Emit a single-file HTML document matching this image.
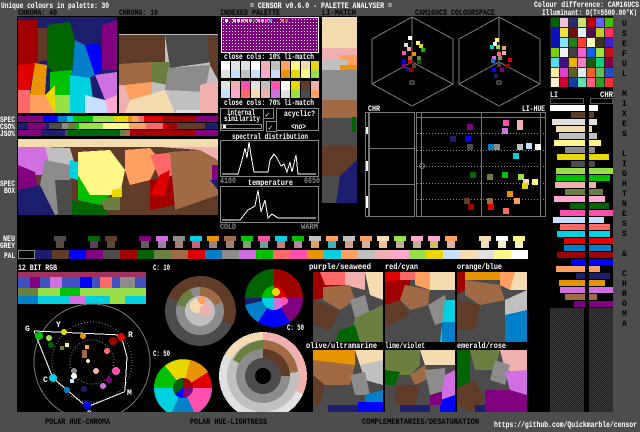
<!DOCTYPE html>
<html><head><meta charset="utf-8"><style>
html,body{margin:0;padding:0;background:#4d4d4d;}
svg{display:block}
text{font-family:"Liberation Mono",monospace;font-weight:bold;fill:#fff;font-size:8px}
</style></head><body>
<svg width="640" height="432" viewBox="0 0 640 432" xmlns="http://www.w3.org/2000/svg" shape-rendering="crispEdges">
<defs>
<pattern id="ck" width="2" height="2" patternUnits="userSpaceOnUse"><rect width="2" height="2" fill="#1e1e1e"/><rect width="1" height="1" fill="#3c3c3c"/><rect x="1" y="1" width="1" height="1" fill="#3c3c3c"/></pattern>
<pattern id="dots" width="3" height="3" patternUnits="userSpaceOnUse"><rect width="3" height="3" fill="#800080"/><rect x="1" y="1" width="1" height="1" fill="#fff"/></pattern>
</defs>
<rect width="640" height="432" fill="#4d4d4d"/>
<rect x="17" y="16" width="597" height="396" fill="#000"/>
<g lengthAdjust="spacingAndGlyphs">
<text x="1" y="8" textLength="108" lengthAdjust="spacingAndGlyphs">Unique colours in palette: 30</text>
<text x="250" y="8" textLength="142" lengthAdjust="spacingAndGlyphs">= CENSOR v0.6.0 - PALETTE ANALYSER =</text>
<text x="534" y="7" textLength="105" lengthAdjust="spacingAndGlyphs">Colour difference: CAM16UCS</text>
<text x="542" y="15" textLength="95" lengthAdjust="spacingAndGlyphs">Illuminant: D(T=5500.00°K)</text>
<text x="18" y="15" textLength="39" lengthAdjust="spacingAndGlyphs" style="fill:#000">CHROMA: 40</text>
<text x="119" y="15" textLength="39" lengthAdjust="spacingAndGlyphs" style="fill:#000">CHROMA: 10</text>
<text x="220" y="15" textLength="60" lengthAdjust="spacingAndGlyphs" style="fill:#000">INDEXED PALETTE</text>
<text x="322" y="15" textLength="34" lengthAdjust="spacingAndGlyphs" style="fill:#000">LI-MATCH</text>
<text x="415" y="15" textLength="80" lengthAdjust="spacingAndGlyphs" style="fill:#000">CAM16UCS COLOURSPACE</text>
</g>
<!-- chroma 40 -->
<g>
<rect x="18" y="17" width="99" height="96" fill="#1d1d6d"/>
<polygon points="18,20 38,20 38,65 18,65" fill="#a00000"/>
<polygon points="38,28 47,28 47,60 38,62" fill="#603c28"/>
<polygon points="47,25 70,22 75,40 72,70 55,75 47,65" fill="#006400"/>
<polygon points="75,40 85,45 95,75 85,80 72,75" fill="#0080c8"/>
<polygon points="85,45 100,43 102,70 95,75" fill="#0000ff"/>
<polygon points="102,25 117,20 117,70 102,70" fill="#800080"/>
<polygon points="18,65 35,63 30,90 18,90" fill="#e00000"/>
<polygon points="35,63 47,65 45,95 30,95" fill="#e89400"/>
<polygon points="50,72 72,70 70,95 50,95" fill="#00c000"/>
<polygon points="70,75 90,78 95,113 70,113" fill="#00d0e0"/>
<polygon points="95,75 117,72 117,95 105,100" fill="#d070e0"/>
<polygon points="18,90 30,90 30,113 18,113" fill="#ff6868"/>
<polygon points="30,95 45,95 55,113 30,113" fill="#ffa060"/>
<polygon points="45,95 55,85 55,113" fill="#e8d800"/>
<polygon points="55,95 70,95 70,113 55,113" fill="#98e048"/>
<polygon points="85,95 105,100 108,113 85,113" fill="#c8e0ff"/>
<polygon points="105,100 117,95 117,113 108,113" fill="#ffa8d0"/>
</g>
<!-- chroma 10 -->
<g>
<rect x="119" y="34" width="99" height="79" fill="#c0c0c0"/>
<polygon points="119,35 165,35 165,62 119,64" fill="#603c28"/>
<polygon points="165,35 207,35 213,62 170,68" fill="#4b4b4b"/>
<polygon points="119,64 152,62 152,85 119,85" fill="#a06a45"/>
<polygon points="152,62 170,62 168,85 152,82" fill="#6b8040"/>
<polygon points="168,68 210,65 205,92 165,90" fill="#8c8c8c"/>
<polygon points="207,35 218,35 218,80 210,65" fill="#603c28"/>
<polygon points="119,85 140,85 135,113 119,113" fill="#f0b0b0"/>
<polygon points="125,85 152,82 152,98 130,102" fill="#ffa060"/>
<polygon points="130,100 165,90 175,113 125,113" fill="#f5dcb0"/>
<polygon points="200,85 218,80 218,113 200,113" fill="#f0b0b0"/>
<rect x="176" y="110" width="24" height="3" fill="#e0e0e0"/>
</g>
<!-- indexed palette -->
<rect x="221" y="17" width="98" height="36" fill="#fff"/>
<rect x="222" y="18" width="96" height="34" fill="url(#dots)"/>
<g>
<rect x="225" y="19" width="3" height="3" fill="#fff"/><rect x="229" y="19" width="3" height="3" fill="#603c28"/><rect x="233" y="19" width="3" height="3" fill="#f5dcb0"/><rect x="237" y="19" width="3" height="3" fill="#e0e0e0"/><rect x="241" y="19" width="3" height="3" fill="#c0c0c0"/><rect x="245" y="19" width="3" height="3" fill="#e8d800"/><rect x="249" y="19" width="3" height="3" fill="#98e048"/><rect x="253" y="19" width="3" height="3" fill="#00c000"/><rect x="257" y="19" width="3" height="3" fill="#f0b0b0"/><rect x="261" y="19" width="3" height="3" fill="#ffa8d0"/><rect x="265" y="19" width="3" height="3" fill="#ff50b0"/><rect x="269" y="19" width="3" height="3" fill="#00d0e0"/><rect x="273" y="19" width="3" height="3" fill="#0000ff"/><rect x="277" y="19" width="3" height="3" fill="#a00000"/><rect x="281" y="19" width="3" height="3" fill="#e89400"/><rect x="285" y="19" width="3" height="3" fill="#a06a45"/><rect x="289" y="19" width="3" height="3" fill="#800080"/>
</g>
<text x="224" y="59" textLength="90" lengthAdjust="spacingAndGlyphs">close cols: 10% li-match</text>
<g>
<rect x="221" y="61" width="9" height="9" fill="#fff"/><rect x="221" y="70" width="9" height="8" fill="#e0e0e0"/>
<rect x="231" y="61" width="9" height="9" fill="#e0e0e0"/><rect x="231" y="70" width="9" height="8" fill="#c8e0ff"/>
<rect x="241" y="61" width="9" height="9" fill="#e0e0e0"/><rect x="241" y="70" width="9" height="8" fill="#c0c0c0"/>
<rect x="251" y="61" width="9" height="9" fill="#fff"/><rect x="251" y="70" width="9" height="8" fill="#c8e0ff"/>
<rect x="261" y="61" width="9" height="9" fill="#f0b0b0"/><rect x="261" y="70" width="9" height="8" fill="#ffa8d0"/>
<rect x="271" y="61" width="9" height="9" fill="#c0c0c0"/><rect x="271" y="70" width="9" height="8" fill="#c8e0ff"/>
<rect x="281" y="61" width="9" height="9" fill="#ffa060"/><rect x="281" y="70" width="9" height="8" fill="#e89400"/>
<rect x="291" y="61" width="9" height="9" fill="#fff888"/><rect x="291" y="70" width="9" height="8" fill="#e8d800"/>
<rect x="301" y="61" width="9" height="9" fill="#f5dcb0"/><rect x="301" y="70" width="9" height="8" fill="#fff888"/>
<rect x="311" y="61" width="8" height="9" fill="#e8d800"/><rect x="311" y="70" width="8" height="8" fill="#98e048"/>
<rect x="221" y="81" width="9" height="9" fill="#e0e0e0"/><rect x="221" y="90" width="9" height="8" fill="#c8e0ff"/>
<rect x="231" y="81" width="9" height="9" fill="#f0b0b0"/><rect x="231" y="90" width="9" height="8" fill="#ffa8d0"/>
<rect x="241" y="81" width="9" height="9" fill="#ff50b0"/><rect x="241" y="90" width="9" height="8" fill="#ff6868"/>
<rect x="251" y="81" width="9" height="9" fill="#e0e0e0"/><rect x="251" y="90" width="9" height="8" fill="#f5dcb0"/>
<rect x="261" y="81" width="9" height="9" fill="#c0c0c0"/><rect x="261" y="90" width="9" height="8" fill="#f0b0b0"/>
<rect x="271" y="81" width="9" height="9" fill="#ff50b0"/><rect x="271" y="90" width="9" height="8" fill="#d070e0"/>
<rect x="281" y="81" width="9" height="9" fill="#fff"/><rect x="281" y="90" width="9" height="8" fill="#e0e0e0"/>
<rect x="291" y="81" width="9" height="9" fill="#e8d800"/><rect x="291" y="90" width="9" height="8" fill="#98e048"/>
<rect x="301" y="81" width="9" height="9" fill="#603c28"/><rect x="301" y="90" width="9" height="8" fill="#4b4b4b"/>
<rect x="311" y="81" width="8" height="9" fill="#f0b0b0"/><rect x="311" y="90" width="8" height="8" fill="#ffa060"/>
</g>
<text x="224" y="105" textLength="90" lengthAdjust="spacingAndGlyphs">close cols: 70% li-match</text>
<g fill="none" stroke="#888" stroke-width="1">
<rect x="220.5" y="108.5" width="43" height="22"/>
<rect x="263.5" y="108.5" width="10" height="10"/>
<rect x="266.5" y="121.5" width="10" height="10"/>
<rect x="276.5" y="108.5" width="42" height="22"/>
<rect x="221.5" y="124.5" width="40" height="4"/>
</g>
<rect x="223" y="125" width="3" height="3" fill="#fff"/>
<text x="227" y="115" textLength="28" lengthAdjust="spacingAndGlyphs">internal</text>
<text x="224" y="121" textLength="36" lengthAdjust="spacingAndGlyphs">similarity</text>
<text x="265" y="117">✓</text><text x="268" y="130">✓</text>
<text x="284" y="116" textLength="31" lengthAdjust="spacingAndGlyphs">acyclic?</text>
<text x="291" y="129" textLength="15" lengthAdjust="spacingAndGlyphs">&lt;no&gt;</text>
<text x="232" y="139" textLength="76" lengthAdjust="spacingAndGlyphs">spectral distribution</text>
<rect x="220.5" y="140.5" width="98" height="36" fill="none" stroke="#888"/>
<polyline fill="none" stroke="#fff" points="222,174 238,174 242,160 245,148 247,158 249,142 251,155 254,172 268,172 270,160 274,154 277,158 281,166 284,164 287,172 290,162 292,172 296,155 298,174 316,174"/>
<text x="220" y="183" textLength="16" lengthAdjust="spacingAndGlyphs" style="fill:#888">4100</text><text x="304" y="183" textLength="16" lengthAdjust="spacingAndGlyphs" style="fill:#888">6650</text>
<text x="248" y="185" textLength="45" lengthAdjust="spacingAndGlyphs">temperature</text>
<rect x="220.5" y="186.5" width="98" height="36" fill="none" stroke="#888"/>
<polyline fill="none" stroke="#fff" points="222,220 240,220 248,210 255,206 258,190 261,212 265,200 268,218 272,214 278,218 316,218"/>
<text x="220" y="229" textLength="16" lengthAdjust="spacingAndGlyphs" style="fill:#888">COLD</text><text x="301" y="229" textLength="17" lengthAdjust="spacingAndGlyphs" style="fill:#888">WARM</text>
<!-- li match column -->
<rect x="322" y="17" width="35" height="186" fill="#4b4b4b"/>
<rect x="322" y="17" width="35" height="40" fill="#f5dcb0"/>
<rect x="322" y="48" width="35" height="12" fill="#f0b0b0"/>
<rect x="340" y="55" width="17" height="12" fill="#ffa060"/>
<rect x="322" y="60" width="25" height="10" fill="#c0c0c0"/>
<rect x="340" y="65" width="17" height="10" fill="#e89400"/>
<rect x="322" y="70" width="35" height="30" fill="#8c8c8c"/>
<rect x="322" y="100" width="35" height="18" fill="#a06a45"/>
<rect x="322" y="118" width="35" height="28" fill="#4b4b4b"/>
<rect x="322" y="146" width="35" height="30" fill="#603c28"/>
<polygon points="340,176 357,160 357,203 336,203" fill="#1d1d6d"/>
<rect x="352" y="117" width="4" height="15" fill="#006400"/>
<!-- spec bars -->
<text x="0" y="122" textLength="15" lengthAdjust="spacingAndGlyphs">SPEC</text><text x="0" y="129" textLength="15" lengthAdjust="spacingAndGlyphs">CSO%</text><text x="0" y="136" textLength="15" lengthAdjust="spacingAndGlyphs">JSO%</text>
<g>
<rect x="18" y="116" width="25" height="6" fill="#800080"/><rect x="43" y="116" width="15" height="6" fill="#0000ff"/><rect x="58" y="116" width="9" height="6" fill="#0080c8"/><rect x="67" y="116" width="6" height="6" fill="#00d0e0"/><rect x="73" y="116" width="20" height="6" fill="#00c000"/><rect x="93" y="116" width="21" height="6" fill="#98e048"/><rect x="114" y="116" width="14" height="6" fill="#e8d800"/><rect x="128" y="116" width="4" height="6" fill="#e89400"/><rect x="132" y="116" width="7" height="6" fill="#ffa060"/><rect x="139" y="116" width="5" height="6" fill="#ff6868"/><rect x="144" y="116" width="19" height="6" fill="#e00000"/><rect x="163" y="116" width="33" height="6" fill="#a00000"/><rect x="196" y="116" width="22" height="6" fill="#800080"/>
<rect x="18" y="123" width="10" height="6" fill="#1d1d6d"/><rect x="28" y="123" width="18" height="6" fill="#800080"/><rect x="46" y="123" width="3" height="6" fill="#1d1d6d"/><rect x="49" y="123" width="13" height="6" fill="#4b4b4b"/><rect x="62" y="123" width="6" height="6" fill="#8c8c8c"/><rect x="68" y="123" width="8" height="6" fill="#6b8040"/><rect x="76" y="123" width="3" height="6" fill="#00c000"/><rect x="79" y="123" width="24" height="6" fill="#98e048"/><rect x="103" y="123" width="26" height="6" fill="#fff888"/><rect x="129" y="123" width="17" height="6" fill="#ffa060"/><rect x="146" y="123" width="17" height="6" fill="#ff6868"/><rect x="163" y="123" width="4" height="6" fill="#e00000"/><rect x="167" y="123" width="10" height="6" fill="#a00000"/><rect x="177" y="123" width="28" height="6" fill="#603c28"/><rect x="205" y="123" width="13" height="6" fill="#1d1d6d"/>
<rect x="18" y="130" width="23" height="6" fill="#800080"/><rect x="41" y="130" width="24" height="6" fill="#1d1d6d"/><rect x="65" y="130" width="3" height="6" fill="#4b4b4b"/><rect x="68" y="130" width="52" height="6" fill="#006400"/><rect x="120" y="130" width="5" height="6" fill="#6b8040"/><rect x="125" y="130" width="5" height="6" fill="#a06a45"/><rect x="130" y="130" width="66" height="6" fill="#a00000"/><rect x="196" y="130" width="22" height="6" fill="#800080"/>
</g>
<!-- spec box -->
<text x="0" y="186" textLength="15" lengthAdjust="spacingAndGlyphs">SPEC</text><text x="4" y="193" textLength="11" lengthAdjust="spacingAndGlyphs">BOX</text>
<g>
<rect x="18" y="139" width="200" height="76" fill="#603c28"/>
<rect x="18" y="139" width="200" height="8" fill="#f5dcb0"/>
<polygon points="18,147 45,147 60,160 45,175 18,175" fill="#d070e0"/>
<polygon points="18,165 35,172 38,190 18,195" fill="#800080"/>
<polygon points="18,190 40,185 55,215 18,215" fill="#1d1d6d"/>
<polygon points="45,147 70,148 75,165 50,165" fill="#c0c0c0"/>
<polygon points="45,160 70,165 72,210 55,215 40,185" fill="#8c8c8c"/>
<polygon points="55,180 72,180 72,215 58,215" fill="#4b4b4b"/>
<polygon points="70,160 78,162 78,180 70,178" fill="#00d0e0"/>
<polygon points="78,152 110,150 125,170 120,195 90,195 78,180" fill="#fff888"/>
<polygon points="78,175 90,195 110,195 100,205 78,200" fill="#00c000"/>
<polygon points="72,200 100,205 110,215 72,215" fill="#006400"/>
<polygon points="100,200 120,195 120,210 105,210" fill="#6b8040"/>
<polygon points="112,190 122,188 122,197 112,197" fill="#e8d800"/>
<polygon points="125,150 150,148 160,160 150,180 130,185 125,170" fill="#ffa060"/>
<polygon points="150,155 175,152 180,175 160,180" fill="#ff6868"/>
<polygon points="150,180 175,175 175,205 150,210" fill="#a00000"/>
<polygon points="160,175 170,170 165,195 150,195" fill="#e00000"/>
<polygon points="170,152 200,150 218,160 218,195 175,210" fill="#a06a45"/>
<polygon points="160,147 218,147 218,160 200,150" fill="#f0b0b0"/>
<polygon points="212,165 218,165 218,180 212,180" fill="#800080"/>
<polygon points="210,180 218,180 218,190" fill="#1d1d6d"/>
</g>
<!-- CAM16 hexagons -->
<g fill="none" stroke="#777">
<polygon points="412,17 453,39 453,84 412,106 372,84 372,39"/>
<polyline points="412,17 412,62 372,84"/><line x1="412" y1="62" x2="453" y2="84"/>
<rect x="410" y="81" width="4" height="3"/>
<polygon points="499,17 540,39 540,84 499,106 459,84 459,39"/>
<polyline points="499,17 499,62 459,84"/><line x1="499" y1="62" x2="540" y2="84"/>
<rect x="497" y="81" width="4" height="3"/>
</g>
<g>
<rect x="408" y="36" width="4" height="4" fill="#fff"/><rect x="416" y="41" width="4" height="4" fill="#fff888"/><rect x="419" y="44" width="4" height="4" fill="#e8d800"/><rect x="421" y="48" width="4" height="4" fill="#00c000"/><rect x="404" y="43" width="4" height="4" fill="#e0e0e0"/><rect x="407" y="47" width="4" height="4" fill="#f0b0b0"/><rect x="402" y="51" width="4" height="4" fill="#ff50b0"/><rect x="412" y="52" width="4" height="4" fill="#e89400"/><rect x="408" y="56" width="4" height="4" fill="#a06a45"/><rect x="417" y="56" width="4" height="4" fill="#6b8040"/><rect x="402" y="59" width="4" height="4" fill="#0000ff"/><rect x="408" y="60" width="4" height="4" fill="#e00000"/><rect x="417" y="60" width="4" height="4" fill="#006400"/><rect x="402" y="64" width="4" height="4" fill="#800080"/><rect x="406" y="67" width="4" height="4" fill="#1d1d6d"/><rect x="409" y="68" width="4" height="4" fill="#a00000"/><rect x="412" y="64" width="4" height="4" fill="#603c28"/>
<rect x="495" y="38" width="4" height="4" fill="#fff888"/><rect x="493" y="42" width="4" height="4" fill="#fff"/><rect x="490" y="45" width="4" height="4" fill="#00d0e0"/><rect x="496" y="45" width="4" height="4" fill="#98e048"/><rect x="502" y="46" width="4" height="4" fill="#ffa060"/><rect x="497" y="52" width="4" height="4" fill="#ff6868"/><rect x="502" y="51" width="4" height="4" fill="#f0b0b0"/><rect x="492" y="56" width="4" height="4" fill="#d070e0"/><rect x="498" y="56" width="4" height="4" fill="#8c8c8c"/><rect x="491" y="59" width="4" height="4" fill="#0080c8"/><rect x="508" y="58" width="4" height="4" fill="#e00000"/><rect x="497" y="63" width="4" height="4" fill="#603c28"/><rect x="506" y="64" width="4" height="4" fill="#a00000"/><rect x="492" y="68" width="4" height="4" fill="#0000ff"/><rect x="500" y="68" width="4" height="4" fill="#800080"/><rect x="494" y="74" width="4" height="4" fill="#1d1d6d"/>
</g>
<!-- useful mixes grid -->
<g>
<rect x="550" y="17" width="64" height="70" fill="#222"/>
<rect x="551" y="18" width="8" height="9" fill="#006400"/><rect x="560" y="18" width="8" height="9" fill="#f0c0e0"/><rect x="569" y="18" width="8" height="9" fill="#2a2a6d"/><rect x="578" y="18" width="8" height="9" fill="#c8e070"/><rect x="587" y="18" width="8" height="9" fill="#c00000"/><rect x="596" y="18" width="8" height="9" fill="#6060ff"/><rect x="605" y="18" width="8" height="9" fill="#40c000"/>
<rect x="551" y="28" width="8" height="9" fill="#1010c0"/><rect x="560" y="28" width="8" height="9" fill="#f0e040"/><rect x="569" y="28" width="8" height="9" fill="#701010"/><rect x="578" y="28" width="8" height="9" fill="#e0f0ff"/><rect x="587" y="28" width="8" height="9" fill="#500a50"/><rect x="596" y="28" width="8" height="9" fill="#c0d020"/><rect x="605" y="28" width="8" height="9" fill="#ff3060"/>
<rect x="551" y="38" width="8" height="9" fill="#1010b0"/><rect x="560" y="38" width="8" height="9" fill="#80e8f0"/><rect x="569" y="38" width="8" height="9" fill="#208020"/><rect x="578" y="38" width="8" height="9" fill="#ff4030"/><rect x="587" y="38" width="8" height="9" fill="#ffffc0"/><rect x="596" y="38" width="8" height="9" fill="#403020"/><rect x="605" y="38" width="8" height="9" fill="#4020c0"/>
<rect x="551" y="48" width="8" height="9" fill="#80d000"/><rect x="560" y="48" width="8" height="9" fill="#f0f0f0"/><rect x="569" y="48" width="8" height="9" fill="#404040"/><rect x="578" y="48" width="8" height="9" fill="#f060d0"/><rect x="587" y="48" width="8" height="9" fill="#1060f0"/><rect x="596" y="48" width="8" height="9" fill="#a0e040"/><rect x="605" y="48" width="8" height="9" fill="#c01010"/>
<rect x="551" y="58" width="8" height="9" fill="#50e0f0"/><rect x="560" y="58" width="8" height="9" fill="#401080"/><rect x="569" y="58" width="8" height="9" fill="#f0b000"/><rect x="578" y="58" width="8" height="9" fill="#f080c0"/><rect x="587" y="58" width="8" height="9" fill="#106010"/><rect x="596" y="58" width="8" height="9" fill="#10d080"/><rect x="605" y="58" width="8" height="9" fill="#800040"/>
<rect x="551" y="68" width="8" height="9" fill="#fff0a0"/><rect x="560" y="68" width="8" height="9" fill="#e040d0"/><rect x="569" y="68" width="8" height="9" fill="#606020"/><rect x="578" y="68" width="8" height="9" fill="#e0e8f0"/><rect x="587" y="68" width="8" height="9" fill="#f06020"/><rect x="596" y="68" width="8" height="9" fill="#60c060"/><rect x="605" y="68" width="8" height="9" fill="#2050c0"/>
<rect x="551" y="78" width="8" height="9" fill="#fff0d0"/><rect x="560" y="78" width="8" height="9" fill="#d00030"/><rect x="569" y="78" width="8" height="9" fill="#1040a0"/><rect x="578" y="78" width="8" height="9" fill="#60e0b0"/><rect x="587" y="78" width="8" height="9" fill="#ff6080"/><rect x="596" y="78" width="8" height="9" fill="#30a020"/><rect x="605" y="78" width="8" height="9" fill="#f03030"/>
</g>
<g style="fill:#000">
<text x="622" y="26" style="fill:#000">U</text><text x="622" y="36" style="fill:#000">S</text><text x="622" y="46" style="fill:#000">E</text><text x="622" y="56" style="fill:#000">F</text><text x="622" y="66" style="fill:#000">U</text><text x="622" y="76" style="fill:#000">L</text>
<text x="622" y="96" style="fill:#000">M</text><text x="622" y="106" style="fill:#000">I</text><text x="622" y="116" style="fill:#000">X</text><text x="622" y="126" style="fill:#000">E</text><text x="622" y="136" style="fill:#000">S</text>
<text x="622" y="156" style="fill:#000">L</text><text x="622" y="166" style="fill:#000">I</text><text x="622" y="176" style="fill:#000">G</text><text x="622" y="186" style="fill:#000">H</text><text x="622" y="196" style="fill:#000">T</text><text x="622" y="206" style="fill:#000">N</text><text x="622" y="216" style="fill:#000">E</text><text x="622" y="226" style="fill:#000">S</text><text x="622" y="236" style="fill:#000">S</text>
<text x="622" y="256" style="fill:#000">&amp;</text>
<text x="622" y="276" style="fill:#000">C</text><text x="622" y="286" style="fill:#000">H</text><text x="622" y="296" style="fill:#000">R</text><text x="622" y="306" style="fill:#000">O</text><text x="622" y="316" style="fill:#000">M</text><text x="622" y="326" style="fill:#000">A</text>
</g>
<!-- LI / CHR bars -->
<text x="550" y="97" textLength="8" lengthAdjust="spacingAndGlyphs">LI</text><text x="600" y="97" textLength="13" lengthAdjust="spacingAndGlyphs">CHR</text>
<g fill="none" stroke="#555">
<rect x="550.5" y="98.5" width="33" height="5"/><rect x="590.5" y="98.5" width="22" height="5"/>
</g>
<rect x="550" y="308" width="34" height="104" fill="url(#ck)"/>
<rect x="589" y="308" width="24" height="104" fill="url(#ck)"/>
<g>
<rect x="550" y="105" width="35" height="6" fill="#fff"/><rect x="589" y="105" width="9" height="6" fill="#fff"/>
<rect x="571" y="112" width="14" height="6" fill="#603c28"/><rect x="589" y="112" width="5" height="6" fill="#603c28"/>
<rect x="552" y="119" width="33" height="6" fill="#e0e0e0"/><rect x="589" y="119" width="8" height="6" fill="#e0e0e0"/>
<rect x="556" y="126" width="29" height="6" fill="#f5dcb0"/><rect x="589" y="126" width="3" height="6" fill="#f5dcb0"/>
<rect x="559" y="133" width="26" height="6" fill="#c0c0c0"/><rect x="589" y="133" width="8" height="6" fill="#c0c0c0"/>
<rect x="554" y="140" width="31" height="6" fill="#fff888"/><rect x="589" y="140" width="12" height="6" fill="#fff888"/>
<rect x="565" y="147" width="20" height="6" fill="#8c8c8c"/><rect x="589" y="147" width="6" height="6" fill="#8c8c8c"/>
<rect x="557" y="154" width="28" height="6" fill="#e8d800"/><rect x="589" y="154" width="20" height="6" fill="#e8d800"/>
<rect x="571" y="161" width="14" height="6" fill="#4b4b4b"/><rect x="589" y="161" width="6" height="6" fill="#4b4b4b"/>
<rect x="556" y="168" width="29" height="6" fill="#98e048"/><rect x="589" y="168" width="24" height="6" fill="#98e048"/>
<rect x="556" y="175" width="29" height="6" fill="#00c000"/><rect x="589" y="175" width="21" height="6" fill="#00c000"/>
<rect x="555" y="182" width="30" height="6" fill="#f0b0b0"/><rect x="589" y="182" width="7" height="6" fill="#f0b0b0"/>
<rect x="565" y="189" width="20" height="6" fill="#6b8040"/><rect x="589" y="189" width="14" height="6" fill="#6b8040"/>
<rect x="554" y="196" width="31" height="6" fill="#ffa8d0"/><rect x="589" y="196" width="16" height="6" fill="#ffa8d0"/>
<rect x="570" y="203" width="15" height="6" fill="#006400"/><rect x="589" y="203" width="20" height="6" fill="#006400"/>
<rect x="560" y="210" width="25" height="6" fill="#ff50b0"/><rect x="589" y="210" width="24" height="6" fill="#ff50b0"/>
<rect x="553" y="217" width="32" height="6" fill="#c8e0ff"/><rect x="589" y="217" width="15" height="6" fill="#c8e0ff"/>
<rect x="560" y="224" width="25" height="6" fill="#ff6868"/><rect x="589" y="224" width="21" height="6" fill="#ff6868"/>
<rect x="557" y="231" width="28" height="6" fill="#00d0e0"/><rect x="589" y="231" width="21" height="6" fill="#00d0e0"/>
<rect x="564" y="238" width="21" height="6" fill="#e00000"/><rect x="589" y="238" width="24" height="6" fill="#e00000"/>
<rect x="564" y="245" width="21" height="6" fill="#0080c8"/><rect x="589" y="245" width="22" height="6" fill="#0080c8"/>
<rect x="557" y="252" width="28" height="6" fill="#a00000"/><rect x="589" y="252" width="24" height="6" fill="#a00000"/>
<rect x="571" y="259" width="14" height="6" fill="#0000ff"/><rect x="589" y="259" width="24" height="6" fill="#0000ff"/>
<rect x="556" y="266" width="29" height="6" fill="#ffa060"/><rect x="589" y="266" width="11" height="6" fill="#ffa060"/>
<rect x="576" y="273" width="9" height="6" fill="#1d1d6d"/><rect x="589" y="273" width="21" height="6" fill="#1d1d6d"/>
<rect x="559" y="280" width="26" height="6" fill="#e89400"/><rect x="589" y="280" width="16" height="6" fill="#e89400"/>
<rect x="560" y="287" width="25" height="6" fill="#d070e0"/><rect x="589" y="287" width="24" height="6" fill="#d070e0"/>
<rect x="565" y="294" width="20" height="6" fill="#a06a45"/><rect x="589" y="294" width="8" height="6" fill="#a06a45"/>
<rect x="574" y="301" width="11" height="6" fill="#800080"/><rect x="589" y="301" width="24" height="6" fill="#800080"/>
</g>
<!-- CHR / LI-HUE -->
<text x="368" y="111" textLength="12" lengthAdjust="spacingAndGlyphs">CHR</text><text x="522" y="111" textLength="23" lengthAdjust="spacingAndGlyphs">LI-HUE</text>
<g fill="none" stroke="#777">
<rect x="365.5" y="112.5" width="3" height="104"/>
<rect x="369.5" y="112.5" width="45" height="104"/>
<line x1="369" y1="148.5" x2="415" y2="148.5"/><line x1="369" y1="184.5" x2="415" y2="184.5"/>
<rect x="416.5" y="112.5" width="129" height="104"/>
<line x1="421.5" y1="113" x2="421.5" y2="216"/><line x1="481.5" y1="113" x2="481.5" y2="216"/><line x1="540.5" y1="113" x2="540.5" y2="216"/>
<line x1="416" y1="117.5" x2="545" y2="117.5"/>
<circle cx="422" cy="166" r="2.5"/>
</g>
<g stroke="#888" stroke-dasharray="1 2">
<line x1="417" y1="133.5" x2="545" y2="133.5"/><line x1="417" y1="150.5" x2="545" y2="150.5"/><line x1="417" y1="166.5" x2="545" y2="166.5"/><line x1="417" y1="183.5" x2="545" y2="183.5"/><line x1="417" y1="199.5" x2="545" y2="199.5"/>
</g>
<rect x="366" y="127" width="2" height="7" fill="#fff"/><rect x="366" y="161" width="2" height="10" fill="#fff"/><rect x="366" y="196" width="2" height="12" fill="#fff"/>
<g>
<rect x="467" y="124" width="6" height="6" fill="#800080"/><rect x="503" y="120" width="6" height="6" fill="#ff50b0"/><rect x="517" y="120" width="6" height="10" fill="#f0b0b0"/><rect x="502" y="128" width="6" height="6" fill="#d070e0"/>
<rect x="450" y="136" width="6" height="6" fill="#1d1d6d"/><rect x="465" y="136" width="6" height="6" fill="#0000ff"/><rect x="467" y="144" width="6" height="6" fill="#4b4b4b"/><rect x="488" y="144" width="6" height="6" fill="#0080c8"/><rect x="494" y="144" width="6" height="6" fill="#8c8c8c"/><rect x="517" y="144" width="6" height="6" fill="#c0c0c0"/><rect x="526" y="143" width="6" height="6" fill="#c8e0ff"/><rect x="535" y="144" width="6" height="6" fill="#fff"/><rect x="513" y="153" width="6" height="6" fill="#00d0e0"/>
<rect x="470" y="172" width="6" height="6" fill="#006400"/><rect x="487" y="174" width="6" height="6" fill="#6b8040"/><rect x="502" y="172" width="6" height="6" fill="#00c000"/><rect x="518" y="174" width="6" height="6" fill="#98e048"/><rect x="523" y="179" width="6" height="6" fill="#f5dcb0"/><rect x="532" y="179" width="6" height="6" fill="#fff888"/><rect x="522" y="183" width="6" height="6" fill="#e8d800"/>
<rect x="507" y="191" width="6" height="6" fill="#e89400"/><rect x="464" y="198" width="6" height="6" fill="#603c28"/><rect x="487" y="198" width="6" height="6" fill="#a06a45"/><rect x="514" y="198" width="6" height="6" fill="#ffa060"/><rect x="468" y="204" width="6" height="6" fill="#a00000"/><rect x="488" y="204" width="6" height="6" fill="#e00000"/><rect x="503" y="208" width="6" height="6" fill="#ff6868"/>
</g>
<!-- NEU GREY / PAL -->
<text x="3" y="241" textLength="12" lengthAdjust="spacingAndGlyphs">NEU</text><text x="0" y="248" textLength="15" lengthAdjust="spacingAndGlyphs">GREY</text><text x="4" y="258" textLength="11" lengthAdjust="spacingAndGlyphs">PAL</text>
<g>
<rect x="54" y="236" width="12" height="5" fill="#4b4b4b"/><rect x="56" y="241" width="8" height="7" fill="#5a4a3a"/>
<rect x="88" y="236" width="12" height="5" fill="#006400"/><rect x="90" y="241" width="8" height="7" fill="#603c5a"/>
<rect x="105" y="236" width="12" height="5" fill="#603c28"/><rect x="107" y="241" width="8" height="7" fill="#5a4a3a"/>
<rect x="139" y="236" width="12" height="5" fill="#800080"/><rect x="141" y="241" width="8" height="7" fill="#606060"/>
<rect x="156" y="236" width="12" height="5" fill="#d070e0"/><rect x="158" y="241" width="8" height="7" fill="#a080a0"/>
<rect x="173" y="236" width="12" height="5" fill="#8c8c8c"/><rect x="175" y="241" width="8" height="7" fill="#a08070"/>
<rect x="190" y="236" width="12" height="5" fill="#00d0e0"/><rect x="192" y="241" width="8" height="7" fill="#d06080"/>
<rect x="207" y="236" width="12" height="5" fill="#e89400"/><rect x="209" y="241" width="8" height="7" fill="#a08080"/>
<rect x="224" y="236" width="12" height="5" fill="#a06a45"/><rect x="226" y="241" width="8" height="7" fill="#a08070"/>
<rect x="241" y="236" width="12" height="5" fill="#00c000"/><rect x="243" y="241" width="8" height="7" fill="#80a070"/>
<rect x="258" y="236" width="12" height="5" fill="#ff50b0"/><rect x="260" y="241" width="8" height="7" fill="#70a090"/>
<rect x="275" y="236" width="12" height="5" fill="#00d0e0"/><rect x="277" y="241" width="8" height="7" fill="#c08080"/>
<rect x="292" y="236" width="12" height="5" fill="#00c000"/><rect x="294" y="241" width="8" height="7" fill="#c080a0"/>
<rect x="309" y="236" width="12" height="5" fill="#c0c0c0"/><rect x="311" y="241" width="8" height="7" fill="#e0a060"/>
<rect x="326" y="236" width="12" height="5" fill="#ffa060"/><rect x="328" y="241" width="8" height="7" fill="#40b0c0"/>
<rect x="343" y="236" width="12" height="5" fill="#c0c0c0"/><rect x="345" y="241" width="8" height="7" fill="#d0a090"/>
<rect x="360" y="236" width="12" height="5" fill="#ffa060"/><rect x="362" y="241" width="8" height="7" fill="#d0b0a0"/>
<rect x="377" y="236" width="12" height="5" fill="#f5dcb0"/><rect x="379" y="241" width="8" height="7" fill="#f0c0a0"/>
<rect x="394" y="236" width="12" height="5" fill="#98e048"/><rect x="396" y="241" width="8" height="7" fill="#c0b090"/>
<rect x="411" y="236" width="12" height="5" fill="#ffa8d0"/><rect x="413" y="241" width="8" height="7" fill="#c0b090"/>
<rect x="428" y="236" width="12" height="5" fill="#ffa8d0"/><rect x="430" y="241" width="8" height="7" fill="#d0c060"/>
<rect x="445" y="236" width="12" height="5" fill="#ffa060"/><rect x="447" y="241" width="8" height="7" fill="#e0b0a0"/>
<rect x="479" y="236" width="12" height="5" fill="#f5dcb0"/><rect x="481" y="241" width="8" height="7" fill="#f0e0c0"/>
<rect x="496" y="236" width="12" height="5" fill="#fff"/><rect x="498" y="241" width="8" height="7" fill="#f0f0c0"/>
<rect x="513" y="236" width="12" height="5" fill="#fff888"/><rect x="515" y="241" width="8" height="7" fill="#f0f0c0"/>
</g>
<g>
<rect x="18.5" y="250.5" width="16" height="8" fill="#000" stroke="#888"/>
<rect x="35" y="250" width="17" height="9" fill="#1d1d6d"/><rect x="52" y="250" width="17" height="9" fill="#603c28"/><rect x="69" y="250" width="17" height="9" fill="#0000ff"/><rect x="86" y="250" width="17" height="9" fill="#800080"/><rect x="103" y="250" width="17" height="9" fill="#4b4b4b"/><rect x="120" y="250" width="17" height="9" fill="#a00000"/><rect x="137" y="250" width="17" height="9" fill="#006400"/><rect x="154" y="250" width="17" height="9" fill="#6b8040"/><rect x="171" y="250" width="17" height="9" fill="#a06a45"/><rect x="188" y="250" width="17" height="9" fill="#e00000"/><rect x="205" y="250" width="17" height="9" fill="#0080c8"/><rect x="222" y="250" width="17" height="9" fill="#8c8c8c"/><rect x="239" y="250" width="17" height="9" fill="#d070e0"/><rect x="256" y="250" width="17" height="9" fill="#00c000"/><rect x="273" y="250" width="17" height="9" fill="#ff6868"/><rect x="290" y="250" width="17" height="9" fill="#ff50b0"/><rect x="307" y="250" width="17" height="9" fill="#e89400"/><rect x="324" y="250" width="17" height="9" fill="#00d0e0"/><rect x="341" y="250" width="17" height="9" fill="#ffa060"/><rect x="358" y="250" width="17" height="9" fill="#c0c0c0"/><rect x="375" y="250" width="17" height="9" fill="#f0b0b0"/><rect x="392" y="250" width="17" height="9" fill="#ffa8d0"/><rect x="409" y="250" width="17" height="9" fill="#98e048"/><rect x="426" y="250" width="17" height="9" fill="#e8d800"/><rect x="443" y="250" width="17" height="9" fill="#c8e0ff"/><rect x="460" y="250" width="17" height="9" fill="#f5dcb0"/><rect x="477" y="250" width="17" height="9" fill="#e0e0e0"/><rect x="494" y="250" width="17" height="9" fill="#fff888"/><rect x="511" y="250" width="17" height="9" fill="#fff"/>
</g>
<!-- 12 bit RGB -->
<text x="18" y="270" textLength="39" lengthAdjust="spacingAndGlyphs">12 BIT RGB</text>
<g>
<rect x="18" y="272" width="128" height="16" fill="#4050c0"/>
<rect x="18" y="272" width="128" height="5" fill="#a03060"/>
<rect x="30" y="277" width="10" height="11" fill="#800080"/><rect x="50" y="277" width="12" height="11" fill="#d070e0"/><rect x="80" y="277" width="12" height="11" fill="#0000ff"/><rect x="100" y="277" width="12" height="11" fill="#ff6868"/><rect x="120" y="277" width="15" height="11" fill="#8c8c8c"/>
<rect x="18" y="288" width="128" height="8" fill="#98e048"/>
<rect x="18" y="288" width="20" height="8" fill="#6b8040"/><rect x="60" y="288" width="20" height="8" fill="#00c000"/>
<rect x="18" y="296" width="128" height="8" fill="#00d0e0"/>
<rect x="18" y="296" width="20" height="8" fill="#0080c8"/><rect x="70" y="296" width="15" height="8" fill="#d070e0"/><rect x="110" y="296" width="15" height="8" fill="#98e048"/>
</g>
<!-- polar hue-chroma -->
<g fill="none">
<circle cx="92" cy="362" r="58" stroke="#777"/>
<circle cx="92" cy="362" r="40" stroke="#777" stroke-dasharray="1 2"/>
<circle cx="92" cy="362" r="22" stroke="#777" stroke-dasharray="1 2"/>
<polyline stroke="#fff" points="34,331 121,335 127,357 125,390 124,392 87,407 53,378 34,331"/>
</g>
<text x="25" y="331">G</text><text x="56" y="327">Y</text><text x="128" y="337">R</text><text x="43" y="382">C</text><text x="127" y="395">M</text><text x="87" y="416">B</text>
<g>
<circle cx="39" cy="336" r="4" fill="#00c000"/><circle cx="49" cy="338" r="3" fill="#98e048"/><circle cx="64" cy="332" r="3" fill="#e8d800"/><circle cx="83" cy="336" r="3" fill="#e89400"/><circle cx="121" cy="337" r="4" fill="#e00000"/><circle cx="113" cy="341" r="4" fill="#a00000"/><circle cx="51" cy="345" r="3" fill="#006400"/><rect x="65" y="343" width="4" height="4" fill="#fff888"/><rect x="60" y="346" width="4" height="4" fill="#6b8040"/><rect x="85" y="345" width="4" height="4" fill="#ffa060"/><circle cx="107" cy="351" r="3" fill="#ff6868"/><rect x="82" y="350" width="5" height="8" fill="#a06a45"/><circle cx="88" cy="361" r="2" fill="#f5dcb0"/><circle cx="74" cy="371" r="3" fill="#8c8c8c"/><circle cx="74" cy="376" r="3" fill="#fff"/><circle cx="96" cy="371" r="3" fill="#f0b0b0"/><circle cx="116" cy="371" r="4" fill="#ff50b0"/><circle cx="109" cy="380" r="3" fill="#800080"/><circle cx="103" cy="386" r="3" fill="#d070e0"/><circle cx="53" cy="378" r="4" fill="#00d0e0"/><rect x="70" y="379" width="4" height="4" fill="#c8e0ff"/><circle cx="67" cy="390" r="3" fill="#0080c8"/><circle cx="84" cy="389" r="3" fill="#1d1d6d"/><circle cx="87" cy="405" r="4" fill="#0000ff"/>
</g>
<!-- hue-lightness circles -->
<text x="153" y="270" textLength="17" lengthAdjust="spacingAndGlyphs">C: 10</text>
<circle cx="200" cy="311" r="35" fill="#4b4b4b"/>
<path d="M200 276 A35 35 0 0 1 233 325 L200 311 Z" fill="#603c28"/>
<path d="M168 297 A35 35 0 0 1 200 276 L200 311 Z" fill="#603c28"/>
<circle cx="200" cy="311" r="24" fill="#8c8c8c"/>
<path d="M200 287 A24 24 0 0 1 222 302 L200 311 Z" fill="#a06a45"/>
<path d="M177 305 A24 24 0 0 1 190 289 L200 311 Z" fill="#6b8040"/>
<circle cx="200" cy="311" r="15" fill="#c0c0c0"/>
<circle cx="197" cy="306" r="7" fill="#f5dcb0"/><circle cx="206" cy="310" r="6" fill="#f0b0b0"/><circle cx="202" cy="300" r="4" fill="#ffa060"/>
<circle cx="274" cy="298" r="29" fill="#1d1d6d"/>
<path d="M245 298 A29 29 0 0 1 274 269 L274 298 Z" fill="#006400"/>
<path d="M274 269 A29 29 0 0 1 303 298 L274 298 Z" fill="#a00000"/>
<path d="M303 298 A29 29 0 0 1 290 322 L274 298 Z" fill="#800080"/>
<path d="M290 322 A29 29 0 0 1 258 322 L274 298 Z" fill="#0000ff"/>
<path d="M258 322 A29 29 0 0 1 245 305 L274 298 Z" fill="#0080c8"/>
<circle cx="274" cy="298" r="12" fill="#00c000"/>
<path d="M274 286 A12 12 0 0 1 286 298 L274 298 Z" fill="#e00000"/>
<path d="M286 298 A12 12 0 0 1 274 310 L274 298 Z" fill="#d070e0"/>
<path d="M274 310 A12 12 0 0 1 262 298 L274 298 Z" fill="#00d0e0"/>
<circle cx="276" cy="292" r="4" fill="#e8d800"/><circle cx="284" cy="301" r="4" fill="#ff50b0"/>
<text x="287" y="330" textLength="17" lengthAdjust="spacingAndGlyphs">C: 50</text>
<text x="153" y="356" textLength="17" lengthAdjust="spacingAndGlyphs">C: 50</text>
<circle cx="183" cy="388" r="29" fill="#00d0e0"/>
<path d="M183 359 A29 29 0 0 1 212 388 L183 388 Z" fill="#e00000"/>
<path d="M212 388 A29 29 0 0 1 195 414 L183 388 Z" fill="#ff50b0"/>
<path d="M195 414 A29 29 0 0 1 171 414 L183 388 Z" fill="#0080c8"/>
<path d="M154 388 A29 29 0 0 1 183 359 L183 388 Z" fill="#00c000"/>
<path d="M165 366 A29 29 0 0 1 190 360 L183 388 Z" fill="#e8d800"/>
<path d="M190 360 A29 29 0 0 1 208 372 L183 388 Z" fill="#e89400"/>
<circle cx="183" cy="388" r="10" fill="#006400"/>
<path d="M183 378 A10 10 0 0 1 193 388 L183 388 Z" fill="#a00000"/>
<path d="M193 388 A10 10 0 0 1 183 398 L183 388 Z" fill="#800080"/>
<path d="M183 398 A10 10 0 0 1 175 394 L183 388 Z" fill="#0000ff"/>
<circle cx="263" cy="376" r="44" fill="#e0e0e0"/>
<path d="M263 332 A44 44 0 0 1 303 394 L263 376 Z" fill="#f0b0b0"/>
<path d="M225 355 A44 44 0 0 1 263 332 L263 376 Z" fill="#f5dcb0"/>
<circle cx="263" cy="376" r="36" fill="#c0c0c0"/>
<path d="M263 340 A36 36 0 0 1 298 372 L263 376 Z" fill="#a06a45"/>
<path d="M233 360 A36 36 0 0 1 263 340 L263 376 Z" fill="#6b8040"/>
<circle cx="263" cy="376" r="27" fill="#8c8c8c"/>
<path d="M263 349 A27 27 0 0 1 290 376 L263 376 Z" fill="#603c28"/>
<circle cx="263" cy="376" r="18" fill="#4b4b4b"/>
<circle cx="263" cy="376" r="8" fill="#000"/>
<text x="287" y="420" textLength="17" lengthAdjust="spacingAndGlyphs">C: 10</text>
<!-- complementaries -->
<rect x="313" y="272" width="70" height="70" fill="#4b4b4b"/>
<polygon points="313,272 345,272 340,295 313,300" fill="#a00000"/><polygon points="320,272 345,272 345,285 325,285" fill="#ff6868"/><polygon points="345,272 365,272 365,290 345,285" fill="#f0b0b0"/><polygon points="365,272 383,272 383,300 370,295" fill="#f5dcb0"/><polygon points="323,287 350,285 355,300 340,310 323,300" fill="#a06a45"/><polygon points="313,300 340,310 330,330 313,325" fill="#603c28"/><polygon points="350,300 365,295 370,315 355,318" fill="#8c8c8c"/><polygon points="355,318 383,305 383,342 350,342" fill="#6b8040"/><polygon points="340,330 355,325 360,342 335,342" fill="#006400"/>
<rect x="385" y="272" width="70" height="70" fill="#4b4b4b"/>
<polygon points="385,272 410,272 410,300 385,305" fill="#a00000"/><polygon points="385,272 400,272 400,280 385,282" fill="#e00000"/><polygon points="400,272 415,272 415,280 400,280" fill="#ff6868"/><polygon points="415,272 430,272 430,290 415,285" fill="#ffa060"/><polygon points="430,272 455,272 455,290 430,290" fill="#f5dcb0"/><polygon points="405,285 430,290 428,305 410,310 400,300" fill="#a06a45"/><polygon points="428,305 445,295 450,320 435,325" fill="#8c8c8c"/><polygon points="445,300 455,300 455,342 440,342" fill="#00d0e0"/><polygon points="442,322 455,322 455,342 442,342" fill="#0080c8"/><polygon points="385,305 400,300 410,315 385,328" fill="#603c28"/>
<rect x="457" y="272" width="70" height="70" fill="#4b4b4b"/>
<polygon points="457,272 465,272 465,290 457,295" fill="#a00000"/><polygon points="465,272 500,272 500,280 465,280" fill="#e89400"/><polygon points="500,272 515,272 510,290 500,285" fill="#ffa060"/><polygon points="515,272 527,272 527,290 510,290" fill="#f5dcb0"/><polygon points="465,280 500,285 505,300 480,305 465,295" fill="#a06a45"/><polygon points="505,300 527,290 527,320 505,315" fill="#c0c0c0"/><polygon points="457,300 480,305 475,330 457,330" fill="#603c28"/><polygon points="505,315 527,310 527,342 505,342" fill="#0080c8"/>
<rect x="313" y="350" width="70" height="70" fill="#4b4b4b"/>
<polygon points="313,350 355,350 355,365 313,360" fill="#e89400"/><polygon points="355,350 383,350 383,365 360,365" fill="#f5dcb0"/><polygon points="313,360 355,365 350,385 325,385 313,375" fill="#a06a45"/><polygon points="360,365 383,360 383,385 365,380" fill="#c0c0c0"/><polygon points="350,375 365,372 370,395 355,395" fill="#8c8c8c"/><polygon points="313,375 325,385 320,405 313,405" fill="#603c28"/><polygon points="365,395 383,390 383,412 365,412" fill="#0080c8"/><rect x="328" y="405" width="30" height="7" fill="#1d1d6d"/><rect x="358" y="402" width="25" height="10" fill="#0000ff"/>
<rect x="385" y="350" width="70" height="70" fill="#4b4b4b"/>
<polygon points="385,350 420,350 420,365 410,375 385,375" fill="#6b8040"/><polygon points="420,350 455,350 455,365 425,365" fill="#f5dcb0"/><polygon points="385,370 400,372 395,385 385,385" fill="#006400"/><polygon points="410,375 425,365 430,378 415,385" fill="#a06a45"/><polygon points="425,370 445,368 445,390 430,395" fill="#8c8c8c"/><polygon points="445,375 455,370 455,400 440,400" fill="#d070e0"/><polygon points="395,385 420,385 415,405 395,405" fill="#603c28"/><polygon points="440,400 455,395 455,412 440,412" fill="#0000ff"/><polygon points="430,395 442,392 442,405 430,405" fill="#800080"/><rect x="400" y="405" width="30" height="7" fill="#1d1d6d"/>
<rect x="457" y="350" width="70" height="70" fill="#4b4b4b"/>
<polygon points="457,350 470,350 470,385 457,388" fill="#006400"/><polygon points="470,350 500,350 495,370 475,370" fill="#6b8040"/><polygon points="500,350 527,350 527,375 505,370" fill="#f0b0b0"/><polygon points="495,360 510,365 505,385 490,380" fill="#8c8c8c"/><polygon points="505,372 527,370 527,395 510,390" fill="#d070e0"/><polygon points="457,388 475,380 485,400 470,412 457,405" fill="#603c28"/><polygon points="485,390 510,390 527,395 527,412 485,412" fill="#800080"/><rect x="475" y="405" width="10" height="7" fill="#1d1d6d"/>
<rect x="300" y="262" width="13" height="9" fill="#000"/>
<text x="309" y="269" textLength="62" lengthAdjust="spacingAndGlyphs">purple/seaweed</text>
<text x="385" y="269" textLength="33" lengthAdjust="spacingAndGlyphs">red/cyan</text>
<text x="457" y="269" textLength="45" lengthAdjust="spacingAndGlyphs">orange/blue</text>
<text x="306" y="348" textLength="71" lengthAdjust="spacingAndGlyphs">olive/ultramarine</text>
<text x="385" y="348" textLength="40" lengthAdjust="spacingAndGlyphs">lime/violet</text>
<text x="457" y="348" textLength="49" lengthAdjust="spacingAndGlyphs">emerald/rose</text>
<rect x="0" y="412" width="640" height="20" fill="#4d4d4d"/>
<rect x="613" y="16" width="27" height="396" fill="#4d4d4d"/>
<text x="45" y="424" textLength="65" lengthAdjust="spacingAndGlyphs" style="fill:#000">POLAR HUE-CHROMA</text>
<text x="190" y="424" textLength="77" lengthAdjust="spacingAndGlyphs" style="fill:#000">POLAR HUE-LIGHTNESS</text>
<text x="362" y="424" textLength="117" lengthAdjust="spacingAndGlyphs" style="fill:#000">COMPLEMENTARIES/DESATURATION</text>
<text x="494" y="427" textLength="143" lengthAdjust="spacingAndGlyphs">https://github.com/Quickmarble/censor</text>
<g style="fill:#000">
<text x="622" y="26" style="fill:#000">U</text><text x="622" y="36" style="fill:#000">S</text><text x="622" y="46" style="fill:#000">E</text><text x="622" y="56" style="fill:#000">F</text><text x="622" y="66" style="fill:#000">U</text><text x="622" y="76" style="fill:#000">L</text>
<text x="622" y="96" style="fill:#000">M</text><text x="622" y="106" style="fill:#000">I</text><text x="622" y="116" style="fill:#000">X</text><text x="622" y="126" style="fill:#000">E</text><text x="622" y="136" style="fill:#000">S</text>
<text x="622" y="156" style="fill:#000">L</text><text x="622" y="166" style="fill:#000">I</text><text x="622" y="176" style="fill:#000">G</text><text x="622" y="186" style="fill:#000">H</text><text x="622" y="196" style="fill:#000">T</text><text x="622" y="206" style="fill:#000">N</text><text x="622" y="216" style="fill:#000">E</text><text x="622" y="226" style="fill:#000">S</text><text x="622" y="236" style="fill:#000">S</text>
<text x="622" y="256" style="fill:#000">&amp;</text>
<text x="622" y="276" style="fill:#000">C</text><text x="622" y="286" style="fill:#000">H</text><text x="622" y="296" style="fill:#000">R</text><text x="622" y="306" style="fill:#000">O</text><text x="622" y="316" style="fill:#000">M</text><text x="622" y="326" style="fill:#000">A</text>
</g>
</svg>
</body></html>
